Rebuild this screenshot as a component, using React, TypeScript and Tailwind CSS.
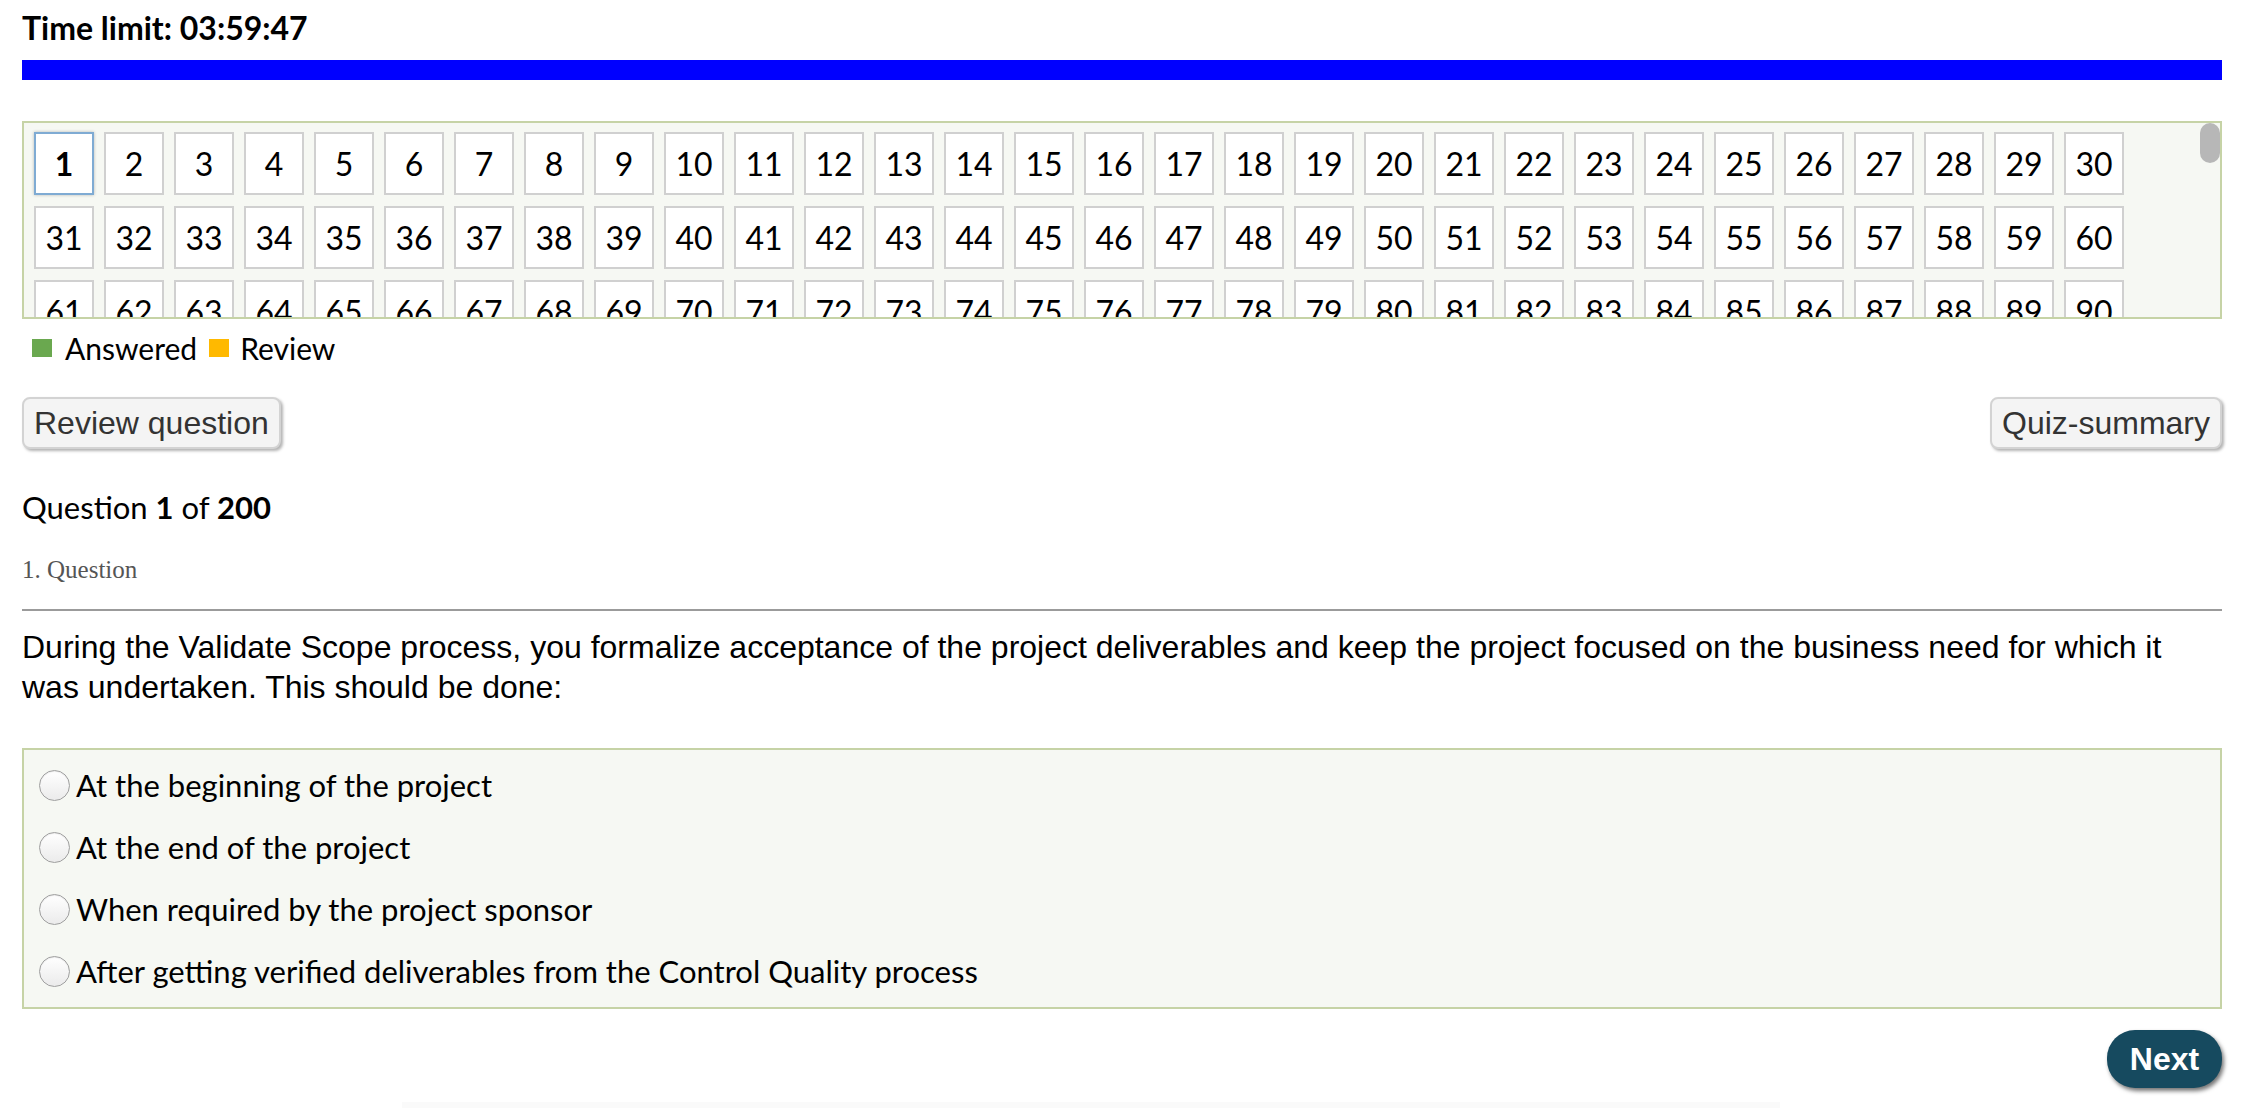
import React from "react";

const sans = "font-['Lato','Noto_Sans',sans-serif]";
const arial = "font-['Liberation_Sans',Arial,sans-serif]";

const answers = [
  "At the beginning of the project",
  "At the end of the project",
  "When required by the project sponsor",
  "After getting verified deliverables from the Control Quality process",
];

function Radio() {
  return (
    <span className="w-[31px] h-[31px] shrink-0 rounded-full border border-[#9f9f9f] bg-gradient-to-b from-[#ffffff] to-[#ebebeb] shadow-[inset_0_1px_1px_rgba(0,0,0,0.08)]" />
  );
}

function NavGrid() {
  const nums = Array.from({ length: 200 }, (_, i) => i + 1);
  return (
    <div className="relative mt-[41px] h-[198px] border-2 border-[#c6d3a6] bg-[#f6f8f3] overflow-hidden">
      <div className="grid grid-cols-[repeat(30,60px)] gap-x-[10px] gap-y-[11px] pl-[10px] pt-[9px]">
        {nums.map((n) => (
          <div
            key={n}
            className={
              n === 1
                ? `h-[63px] flex items-center justify-center bg-white border-2 border-[#7fabd3] shadow-[0_0_3px_rgba(0,0,0,0.25)] text-[32px] font-bold text-black ${sans}`
                : `h-[63px] flex items-center justify-center bg-white border-2 border-[#d0d0d0] text-[32px] text-black ${sans}`
            }
          >
            {n}
          </div>
        ))}
      </div>
      <div className="absolute right-0 top-0 w-[20px] h-[40px] rounded-full bg-[#b7b7b7]" />
    </div>
  );
}

export default function App() {
  return (
    <div className="min-h-screen bg-white">
      <div className="pl-[22px] w-[2222px]">
        <div className={`mt-[8px] leading-[40px] text-[32px] font-bold text-black ${sans}`}>
          Time limit: 03:59:47
        </div>
        <div className="mt-[12px] h-[20px] bg-[#0000ff]" />

        <NavGrid />

        <div className={`mt-[9px] h-[40px] flex items-center text-[30px] text-black ${sans}`}>
          <span className="w-[20px] h-[18px] bg-[#6aa84f] ml-[10px] mr-[13px]" />
          <span>Answered</span>
          <span className="w-[20px] h-[18px] bg-[#ffb900] ml-[12px] mr-[11px]" />
          <span>Review</span>
        </div>

        <div className="mt-[29px] flex justify-between">
          <button className={`h-[52px] px-[10px] rounded-[8px] border-2 border-[#d3d3d3] bg-[#f4f4f4] text-[32px] text-[#333] shadow-[2px_2px_3px_rgba(0,0,0,0.3)] ${arial}`}>
            Review question
          </button>
          <button className={`h-[52px] px-[10px] rounded-[8px] border-2 border-[#d3d3d3] bg-[#f4f4f4] text-[32px] text-[#333] shadow-[2px_2px_3px_rgba(0,0,0,0.3)] ${arial}`}>
            Quiz-summary
          </button>
        </div>

        <div className={`mt-[38px] leading-[40px] text-[31px] text-black ${sans}`}>
          Question <b>1</b> of <b>200</b>
        </div>

        <div className="mt-[28px] leading-[30px] text-[25px] text-[#555] font-['Liberation_Serif',serif]">
          1. Question
        </div>

        <div className="mt-[24px] h-[2px] bg-[#9b9b9b]" />

        <p className={`mt-[16px] text-[32px] leading-[40px] text-black ${arial}`}>
          During the Validate Scope process, you formalize acceptance of the project deliverables and keep the
          project focused on the business need for which it was undertaken. This should be done:
        </p>

        <div className="mt-[41px] h-[261px] border-2 border-[#c6d3a6] bg-[#f6f8f3] pt-[4px]">
          {answers.map((a) => (
            <label key={a} className={`h-[62px] flex items-center gap-[6px] pl-[15px] text-[31px] text-black ${sans}`}>
              <Radio />
              <span>{a}</span>
            </label>
          ))}
        </div>

        <div className="mt-[21px] flex justify-end">
          <button className={`h-[58px] w-[115px] rounded-[28px] bg-[#164a5f] text-white text-[32px] font-bold shadow-[2px_3px_4px_rgba(0,0,0,0.55)] ${arial}`}>
            Next
          </button>
        </div>
      </div>
      <div className="fixed bottom-0 left-[402px] w-[1378px] h-[6px] bg-[#fafafa]" />
    </div>
  );
}
